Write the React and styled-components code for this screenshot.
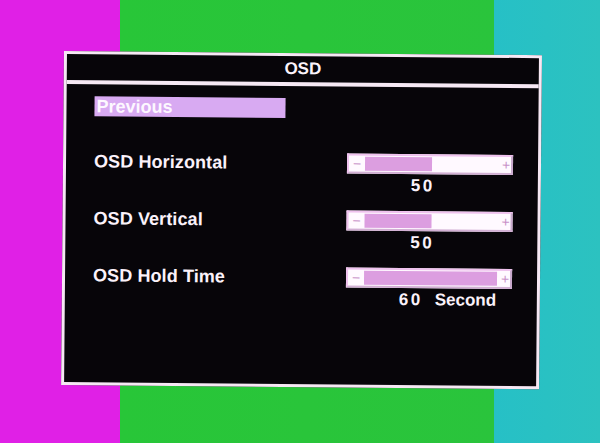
import React from 'react'
import styled, { createGlobalStyle } from 'styled-components'

const Global = createGlobalStyle`
  html, body {
    margin: 0;
    padding: 0;
  }
  body {
    width: 600px;
    height: 443px;
    overflow: hidden;
    font-family: "Liberation Sans", Arial, sans-serif;
    background: linear-gradient(
      to right,
      #e020e6 0px,
      #e020e6 120px,
      #28c638 120px,
      #2ac43c 494px,
      #26c0c6 494px,
      #2cc2c0 600px
    );
  }
`

const Screen = styled.div`
  width: 600px;
  height: 443px;
  padding: 51px 0 0 64px;
  box-sizing: border-box;
`

const Panel = styled.div`
  width: 478px;
  height: 334px;
  box-sizing: border-box;
  border: 3px solid #f6e8f4;
  background: #070509;
  display: flex;
  flex-direction: column;
  transform: rotate(0.5deg);
  transform-origin: left top;
`

const TitleBar = styled.div`
  height: 26px;
  border-bottom: 4px solid #f6e8f4;
  display: flex;
  align-items: center;
  justify-content: center;
  color: #fbf4fb;
  font-weight: 700;
  font-size: 17px;
`

const Body = styled.div`
  flex: 1;
  padding: 12px 0 0 28px;
  display: grid;
  grid-template-columns: 253px 166px;
  grid-auto-rows: min-content;
  row-gap: 17px;
  color: #fbf2fa;
  font-weight: 700;
`

const Previous = styled.div`
  grid-column: 1 / span 2;
  width: 191px;
  height: 20px;
  margin-bottom: 18px;
  background: #d8aaf2;
  color: #fdf8ff;
  font-size: 18px;
  line-height: 20px;
  padding-left: 2px;
  box-sizing: border-box;
`

const Label = styled.div`
  font-size: 18px;
  line-height: 20px;
  letter-spacing: 0.1px;
`

const Control = styled.div`
  display: flex;
  flex-direction: column;
`

const Track = styled.div`
  height: 20px;
  box-sizing: border-box;
  border: 2px solid #efc2ee;
  border-right-color: #c8a8cc;
  border-bottom-color: #d2b0d4;
  background: #fff9ff;
  display: flex;
  align-items: center;
  padding: 0 1px 0 4px;
  gap: 4px;
`

const Sign = styled.span`
  width: 8px;
  color: #c890c8;
  font-size: 14px;
  font-weight: 400;
  line-height: 1;
  text-align: center;
`

const Range = styled.div`
  flex: 1;
  height: 14px;
  display: flex;
`

const Fill = styled.div`
  height: 100%;
  background: #dc9ee0;
`

const Value = styled.div`
  padding-left: ${p => p.$indent}px;
  margin-top: 4px;
  font-size: 17px;
  line-height: 16px;
  display: flex;
  gap: 12px;
`

const Num = styled.span`
  letter-spacing: 2.5px;
`

const rows = [
  { label: 'OSD Horizontal', value: 50, max: 100, indent: 64 },
  { label: 'OSD Vertical', value: 50, max: 100, indent: 64 },
  { label: 'OSD Hold Time', value: 60, max: 60, unit: 'Second', indent: 53 },
]

export default function App() {
  return (
    <>
      <Global />
      <Screen>
        <Panel>
          <TitleBar>OSD</TitleBar>
          <Body>
            <Previous>Previous</Previous>
            {rows.map(r => (
              <React.Fragment key={r.label}>
                <Label>{r.label}</Label>
                <Control>
                  <Track>
                    <Sign>−</Sign>
                    <Range>
                      <Fill style={{ width: `${(r.value / r.max) * 100}%` }} />
                    </Range>
                    <Sign>+</Sign>
                  </Track>
                  <Value $indent={r.indent}>
                    <Num>{r.value}</Num>
                    {r.unit && <span>{r.unit}</span>}
                  </Value>
                </Control>
              </React.Fragment>
            ))}
          </Body>
        </Panel>
      </Screen>
    </>
  )
}
